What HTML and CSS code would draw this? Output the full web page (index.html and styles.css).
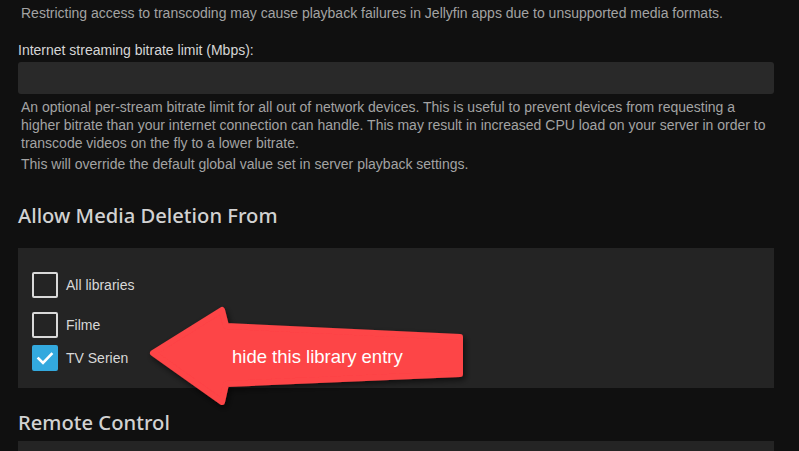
FILE: index.html
```html
<!DOCTYPE html>
<html>
<head>
<meta charset="utf-8">
<link rel="stylesheet" href="styles.css">
</head>
<body>
<div class="page">
  <div class="desc first">Restricting access to transcoding may cause playback failures in Jellyfin apps due to unsupported media formats.</div>
  <label class="label">Internet streaming bitrate limit (Mbps):</label>
  <div class="input"></div>
  <div class="desc d1">An optional per-stream bitrate limit for all out of network devices. This is useful to prevent devices from requesting a higher bitrate than your internet connection can handle. This may result in increased CPU load on your server in order to transcode videos on the fly to a lower bitrate.</div>
  <div class="desc d2">This will override the default global value set in server playback settings.</div>
  <h2 class="heading h-first">Allow Media Deletion From</h2>
  <div class="panel">
    <div class="check-row row-all"><span class="box"></span><span class="cb-label">All libraries</span></div>
    <div class="check-row row-filme"><span class="box"></span><span class="cb-label">Filme</span></div>
    <div class="check-row row-tv"><span class="box checked"><svg viewBox="0 0 26 26" width="26" height="26"><path d="M6.5 13.5 L11 18 L19.5 9" fill="none" stroke="#fff" stroke-width="2.6" stroke-linecap="square"/></svg></span><span class="cb-label">TV Serien</span></div>
  </div>
  <h2 class="heading h-second">Remote Control</h2>
  <div class="panel panel2"></div>
</div>
<div class="callout">
  <svg class="arrow" width="340" height="130" viewBox="0 0 340 130">
    <defs>
      <filter id="sh" x="-10%" y="-20%" width="130%" height="150%">
        <feDropShadow dx="2" dy="3" stdDeviation="3" flood-color="#000" flood-opacity="0.6"/>
      </filter>
    </defs>
    <polygon filter="url(#sh)" points="13,58 82,15 86,31 320,42 320,79 86,89 82,107" fill="#fd4446" stroke="#fd4446" stroke-width="6" stroke-linejoin="round"/>
  </svg>
  <span class="callout-text">hide this library entry</span>
</div>
</body>
</html>
```
FILE: styles.css
```css
html, body {
  margin: 0;
  padding: 0;
  background: #101010;
}
body {
  font-family: "Liberation Sans", Arial, sans-serif;
  position: relative;
  overflow: hidden;
  height: 451px;
}
.page {
  width: 756px;
  margin-left: 18px;
  display: flex;
  flex-direction: column;
}
.desc {
  color: #a3a3a3;
  font-size: 14px;
  line-height: 18px;
  padding-left: 3px;
}
.first { margin-top: 4px; }
.label {
  display: block;
  color: #d6d6d6;
  font-size: 14px;
  line-height: 18px;
  margin-top: 19px;
}
.input {
  height: 32px;
  margin-top: 3px;
  background: #292929;
  border-radius: 3px;
}
.d1 { margin-top: 4px; }
.d2 { margin-top: 3px; }
.heading {
  font-family: "Noto Sans", sans-serif;
  font-weight: 500;
  font-size: 20.2px;
  line-height: 28px;
  color: #d2d2d2;
  margin: 0;
}
.h-first { margin-top: 28px; }
.h-second { margin-top: 20px; }
.panel {
  background: #242424;
  margin-top: 19px;
  padding: 24px 14px 17px;
  display: flex;
  flex-direction: column;
}
.panel2 {
  margin-top: 5px;
  height: 40px;
  padding: 0;
}
.check-row {
  display: flex;
  align-items: center;
  height: 26px;
}
.row-filme { margin-top: 14px; }
.row-tv { margin-top: 7px; }
.box {
  width: 26px;
  height: 26px;
  box-sizing: border-box;
  border: 2px solid #d9d9d9;
  border-radius: 2px;
  position: relative;
}
.box.checked {
  background: #33a9de;
  border-color: #33a9de;
}
.box.checked svg {
  position: absolute;
  left: -2px;
  top: -2px;
}
.cb-label {
  margin-left: 8px;
  color: #d8d8d8;
  font-size: 14px;
}
.callout {
  position: absolute;
  left: 140px;
  top: 295px;
  width: 340px;
  height: 130px;
}
.arrow {
  position: absolute;
  left: 0;
  top: 0;
}
.callout-text {
  position: absolute;
  left: 92px;
  top: 52px;
  color: #fff;
  font-size: 18.5px;
  line-height: 20px;
  font-family: "Liberation Sans", Arial, sans-serif;
}
```
